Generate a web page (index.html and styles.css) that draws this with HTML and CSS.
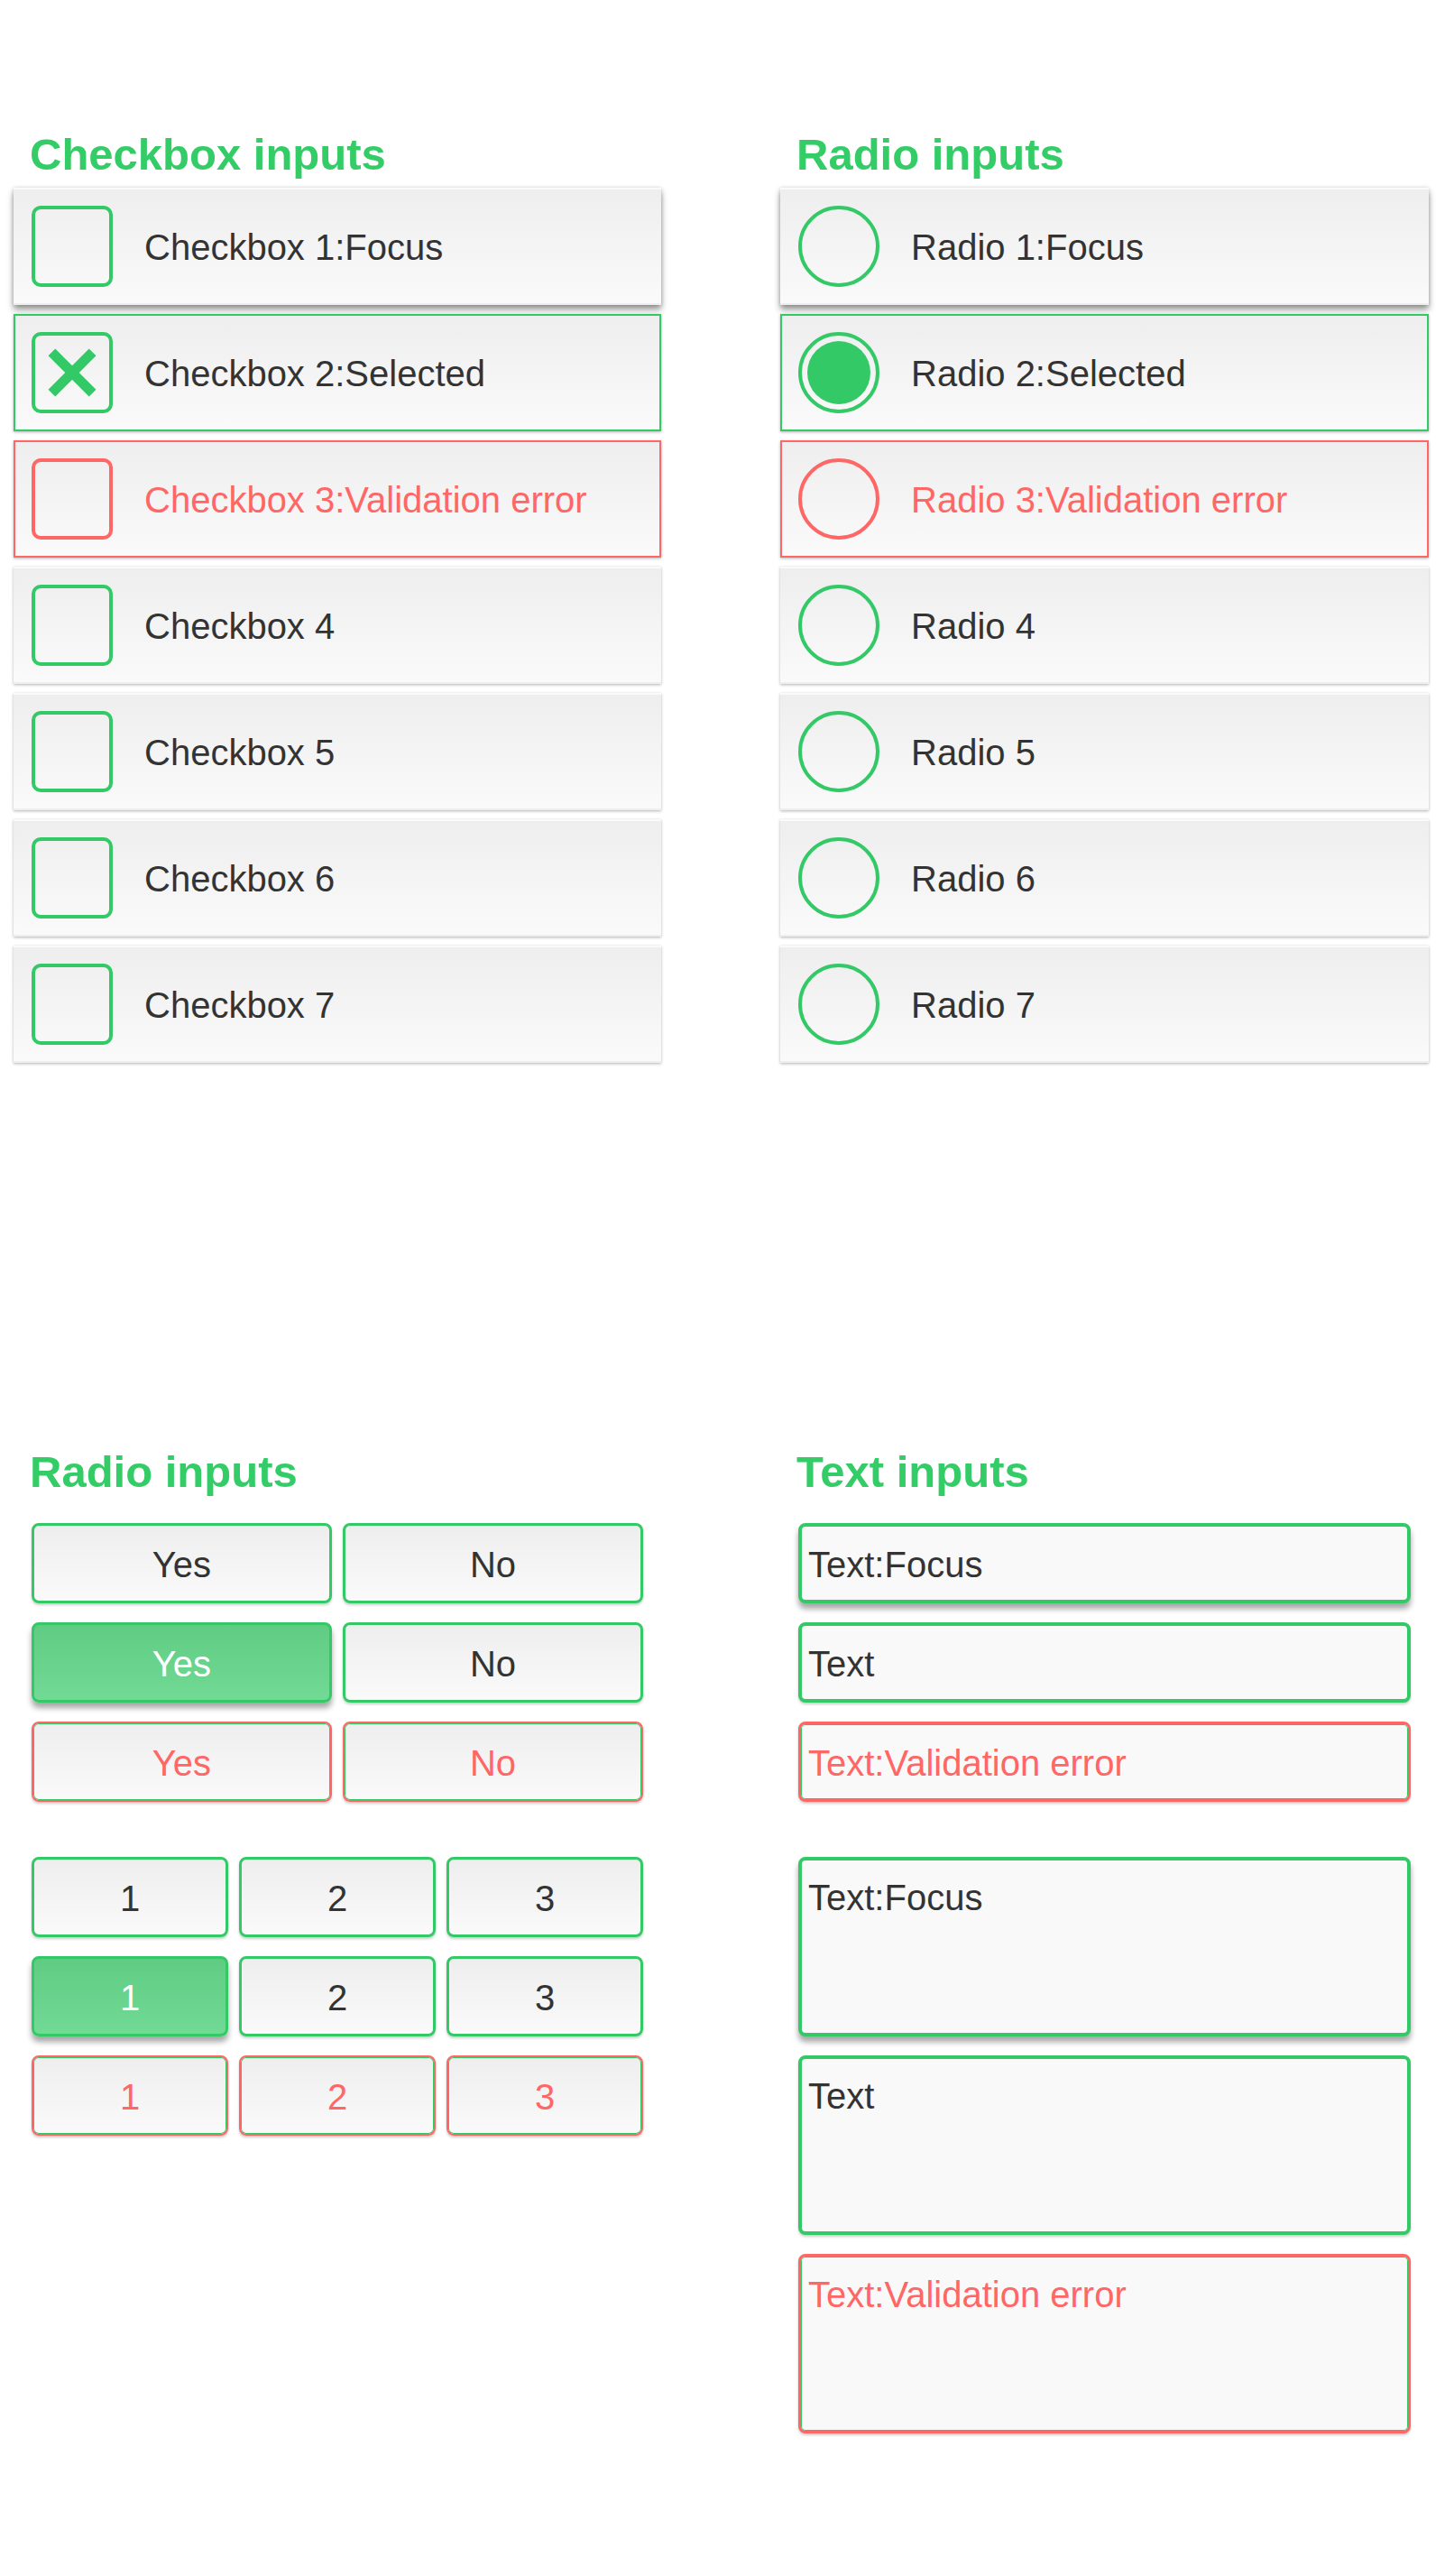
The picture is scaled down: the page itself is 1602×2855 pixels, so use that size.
FILE: index.html
```html
<!DOCTYPE html>
<html lang="en">
<head>
<meta charset="utf-8">
<title>Form inputs</title>
<link rel="stylesheet" href="styles.css">
</head>
<body>
<main class="page">
  <section class="section">
    <div class="column">
      <h2 class="title">Checkbox inputs</h2>
      <div class="choices">
        <label class="choice focus"><span class="box"></span><span class="text">Checkbox 1:Focus</span></label>
        <label class="choice selected"><span class="box"><svg class="cross" viewBox="0 0 54 54" width="54" height="54"><path d="M4.4 4.4 49.6 49.6M49.6 4.4 4.4 49.6" stroke="#34c967" stroke-width="11" fill="none"/></svg></span><span class="text">Checkbox 2:Selected</span></label>
        <label class="choice error"><span class="box"></span><span class="text">Checkbox 3:Validation error</span></label>
        <label class="choice"><span class="box"></span><span class="text">Checkbox 4</span></label>
        <label class="choice"><span class="box"></span><span class="text">Checkbox 5</span></label>
        <label class="choice"><span class="box"></span><span class="text">Checkbox 6</span></label>
        <label class="choice"><span class="box"></span><span class="text">Checkbox 7</span></label>
      </div>
    </div>
    <div class="column">
      <h2 class="title">Radio inputs</h2>
      <div class="choices">
        <label class="choice focus"><span class="box round"></span><span class="text">Radio 1:Focus</span></label>
        <label class="choice selected"><span class="box round"><span class="dot"></span></span><span class="text">Radio 2:Selected</span></label>
        <label class="choice error"><span class="box round"></span><span class="text">Radio 3:Validation error</span></label>
        <label class="choice"><span class="box round"></span><span class="text">Radio 4</span></label>
        <label class="choice"><span class="box round"></span><span class="text">Radio 5</span></label>
        <label class="choice"><span class="box round"></span><span class="text">Radio 6</span></label>
        <label class="choice"><span class="box round"></span><span class="text">Radio 7</span></label>
      </div>
    </div>
  </section>

  <section class="section">
    <div class="column">
      <h2 class="title">Radio inputs</h2>
      <div class="groups">
        <div class="group buttons two">
          <button type="button" class="btn">Yes</button>
          <button type="button" class="btn">No</button>
          <button type="button" class="btn on">Yes</button>
          <button type="button" class="btn">No</button>
          <button type="button" class="btn bad">Yes</button>
          <button type="button" class="btn bad">No</button>
        </div>
        <div class="group buttons three">
          <button type="button" class="btn">1</button>
          <button type="button" class="btn">2</button>
          <button type="button" class="btn">3</button>
          <button type="button" class="btn on">1</button>
          <button type="button" class="btn">2</button>
          <button type="button" class="btn">3</button>
          <button type="button" class="btn bad">1</button>
          <button type="button" class="btn bad">2</button>
          <button type="button" class="btn bad">3</button>
        </div>
      </div>
    </div>
    <div class="column">
      <h2 class="title">Text inputs</h2>
      <div class="groups">
        <div class="group fields">
          <input class="field focus" type="text" value="Text:Focus" readonly>
          <input class="field" type="text" value="Text" readonly>
          <input class="field bad" type="text" value="Text:Validation error" readonly>
        </div>
        <div class="group fields">
          <textarea class="field area focus" readonly>Text:Focus</textarea>
          <textarea class="field area" readonly>Text</textarea>
          <textarea class="field area bad" readonly>Text:Validation error</textarea>
        </div>
      </div>
    </div>
  </section>
</main>
</body>
</html>
```

FILE: styles.css
```css
* {
  box-sizing: border-box;
}

body {
  margin: 0;
  background: #ffffff;
  font-family: "Liberation Sans", Arial, sans-serif;
  color: #333333;
}

.page {
  width: 1602px;
  padding: 143px 18px 138px 15px;
}

.section {
  display: grid;
  grid-template-columns: 718px 719px;
  column-gap: 132px;
}

.section + .section {
  margin-top: 425px;
}

.title {
  margin: 0 0 9px;
  padding-left: 18px;
  font-size: 49px;
  line-height: 56px;
  font-weight: bold;
  color: #33cc66;
}

/* checkbox / radio rows */
.choices {
  display: flex;
  flex-direction: column;
  gap: 10px;
}

.choice {
  display: flex;
  align-items: center;
  height: 130px;
  padding-left: 18px;
  border: 2px solid transparent;
  background: linear-gradient(#eeeeee, #fafafa);
  box-shadow: 0 1px 3px rgba(0, 0, 0, 0.3);
  font-size: 40px;
  color: #333333;
}

.choice .text {
  padding-top: 3px;
}

.choice.focus {
  box-shadow: 0 5px 7px rgba(0, 0, 0, 0.42), 0 0 4px rgba(0, 0, 0, 0.15);
}

.choice.selected {
  border-color: #34c967;
}

.choice.error {
  border-color: #ff6666;
  color: #ff6666;
}

.box {
  flex: none;
  display: flex;
  align-items: center;
  justify-content: center;
  width: 90px;
  height: 90px;
  margin-right: 35px;
  border: 4px solid #34c967;
  border-radius: 10px;
}

.box.round {
  border-radius: 50%;
}

.error .box {
  border-color: #ff6666;
}

.cross {
  display: block;
}

.dot {
  width: 70px;
  height: 70px;
  border-radius: 50%;
  background: #34c967;
}

/* segmented buttons and text fields */
.groups {
  display: flex;
  flex-direction: column;
  gap: 21px;
}

.group {
  padding: 20px;
}

.buttons {
  display: grid;
  row-gap: 21px;
  column-gap: 12px;
}

.buttons.two {
  grid-template-columns: 1fr 1fr;
}

.buttons.three {
  grid-template-columns: 1fr 1fr 1fr;
}

.btn {
  height: 89px;
  margin: 0;
  padding: 3px 0 0;
  border: 3px solid #34c967;
  border-radius: 8px;
  background: linear-gradient(#eeeeee, #fafafa);
  box-shadow: 0 2px 3px rgba(0, 0, 0, 0.2);
  font-family: "Liberation Sans", Arial, sans-serif;
  font-size: 40px;
  color: #333333;
}

.btn.on {
  background: linear-gradient(#60cc83, #71da95);
  color: #ffffff;
  box-shadow: 0 6px 6px rgba(0, 0, 0, 0.35);
}

.btn.bad {
  border: 2px solid #ff6666;
  box-shadow: inset 0 0 0 1px #34c967, 0 2px 3px rgba(0, 0, 0, 0.2);
  color: #ff6666;
}

.fields {
  display: flex;
  flex-direction: column;
  gap: 21px;
}

.field {
  display: block;
  width: 100%;
  height: 89px;
  margin: 0;
  padding: 3px 7px 0;
  border: 4px solid #34c967;
  border-radius: 8px;
  background: #f9f9f9;
  box-shadow: 0 2px 3px rgba(0, 0, 0, 0.2);
  font-family: "Liberation Sans", Arial, sans-serif;
  font-size: 40px;
  color: #333333;
  outline: none;
}

.field.area {
  height: 199px;
  padding-top: 18px;
  resize: none;
  overflow: hidden;
  line-height: 46px;
}

.field.focus {
  box-shadow: 0 6px 6px rgba(0, 0, 0, 0.35);
}

.field.bad {
  border: 3px solid #ff6666;
  box-shadow: inset 0 0 0 1px #34c967, 0 2px 3px rgba(0, 0, 0, 0.2);
  color: #ff6666;
  padding-left: 8px;
}

.field.area.bad {
  padding-top: 19px;
}
```
